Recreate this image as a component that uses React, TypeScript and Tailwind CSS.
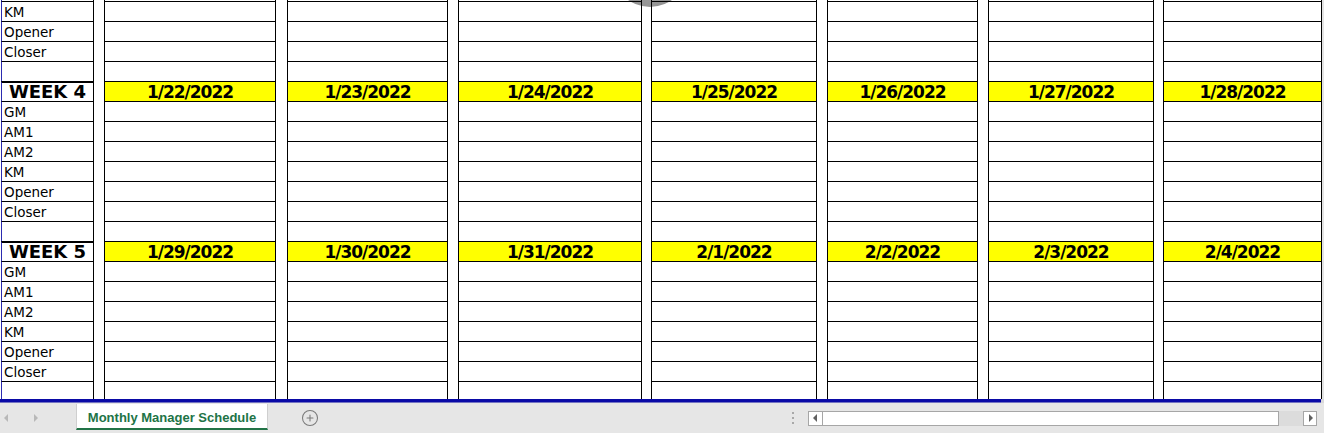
import { CirclePlus } from "lucide-react";

type Row = { kind: "label"; text: string } | { kind: "week"; week: string; dates: string[] } | { kind: "blank" };

const COLS = [172, 161, 184, 166, 151, 166, 159];
const GAPS = [11, 10, 9, 10, 10, 9];

const ROLES = ["GM", "AM1", "AM2", "KM", "Opener", "Closer"];

const rows: Row[] = [
  { kind: "label", text: "KM" },
  { kind: "label", text: "Opener" },
  { kind: "label", text: "Closer" },
  { kind: "blank" },
  { kind: "week", week: "WEEK 4", dates: ["1/22/2022", "1/23/2022", "1/24/2022", "1/25/2022", "1/26/2022", "1/27/2022", "1/28/2022"] },
  ...ROLES.map((r) => ({ kind: "label" as const, text: r })),
  { kind: "blank" },
  { kind: "week", week: "WEEK 5", dates: ["1/29/2022", "1/30/2022", "1/31/2022", "2/1/2022", "2/2/2022", "2/3/2022", "2/4/2022"] },
  ...ROLES.map((r) => ({ kind: "label" as const, text: r })),
  { kind: "blank" },
];

const SheetRow = ({ row, height, top = true }: { row?: Row; height: number; top?: boolean }) => {
  const isWeek = row?.kind === "week";
  const lineTop = top ? "border-t border-t-black" : "";
  return (
    <div className="flex" style={{ height }}>
      <div className="w-[1px]" />
      <div
        className={`w-[93px] border-l border-l-[#2b2bb0] border-r border-r-black flex items-end ${
          isWeek ? "border-t-2 border-t-black justify-center" : lineTop
        }`}
      >
        {row?.kind === "label" && (
          <span className="pl-[2px] pb-[2px] text-[13.5px] leading-[14px] text-black font-['DejaVu_Sans',sans-serif]">
            {row.text}
          </span>
        )}
        {row?.kind === "week" && (
          <span className="text-[18px] leading-[18px] font-bold text-black font-['DejaVu_Sans',sans-serif]">
            {row.week}
          </span>
        )}
      </div>
      <div className="w-[10px]" />
      {COLS.map((w, i) => (
        <div key={i} className="flex">
          <div
            className={`border-x border-black flex items-end justify-center ${lineTop} ${isWeek ? "bg-[#ffff00]" : ""}`}
            style={{ width: w }}
          >
            {row?.kind === "week" && (
              <span className="text-[17px] leading-[17px] font-bold tracking-[-1px] text-black font-['DejaVu_Sans',sans-serif]">
                {row.dates[i]}
              </span>
            )}
          </div>
          {i < GAPS.length && <div style={{ width: GAPS[i] }} />}
        </div>
      ))}
      <div className="w-[2px] bg-[#e3e3e3]" />
    </div>
  );
};

const Tri = ({ dir, className }: { dir: "l" | "r"; className?: string }) => (
  <svg width="5" height="8" viewBox="0 0 5 8" className={className}>
    <path d={dir === "l" ? "M4 0 L0 4 L4 8 Z" : "M1 0 L5 4 L1 8 Z"} fill="currentColor" />
  </svg>
);

export default function App() {
  return (
    <div className="relative w-[1324px] h-[433px] bg-white overflow-hidden">
      {/* spinner peeking from the top */}
      <div className="absolute left-[612px] top-[-69px] w-[76px] h-[76px] rounded-full bg-[radial-gradient(circle_at_50%_85%,#9a9a9a,#747474)]" />

      <div className="relative">
        <SheetRow height={1} top={false} />
        {rows.map((r, i) => (
          <SheetRow key={i} row={r} height={i === rows.length - 1 ? 18 : 20} />
        ))}
        <div className="flex">
          <div className="w-[1321px]">
            <div className="h-[3px] bg-[#0a0aa6]" />
            <div className="h-[1px] bg-[#7474c2]" />
          </div>
          <div className="w-[3px] bg-[#d9d9d9]" />
        </div>
      </div>

      {/* sheet tab bar */}
      <div className="flex h-[30px] bg-[#e6e6e6] font-['Liberation_Sans',sans-serif]">
        <div className="w-[76px] flex items-center text-[#b8b8b8]">
          <Tri dir="l" className="ml-[4px]" />
          <Tri dir="r" className="ml-[24px]" />
        </div>
        <div className="w-[192px] h-[26px] mt-[1px] pt-[2px] bg-white border-x border-[#cfcfcf] border-b-2 border-b-[#217346] flex items-center justify-center">
          <span className="text-[13px] font-bold text-[#217346] leading-none">Monthly Manager Schedule</span>
        </div>
        <div className="ml-[33px] flex items-center text-[#7a7a7a]">
          <CirclePlus size={18} strokeWidth={1.4} />
        </div>
        <div className="ml-[473px] flex flex-col justify-center gap-[3px]">
          <div className="w-[2px] h-[2px] bg-[#a8a8a8]" />
          <div className="w-[2px] h-[2px] bg-[#a8a8a8]" />
          <div className="w-[2px] h-[2px] bg-[#a8a8a8]" />
        </div>
        <div className="ml-[14px] flex items-center">
          <div className="flex h-[15px]">
            <div className="w-[15px] bg-white border border-[#a6a6a6] flex items-center justify-center text-[#606060]">
              <Tri dir="l" />
            </div>
            <div className="w-[456px] bg-white border-y border-r border-[#a6a6a6]" />
            <div className="w-[24px] bg-[#dcdcdc]" />
            <div className="w-[14px] bg-white border border-[#a6a6a6] flex items-center justify-center text-[#606060]">
              <Tri dir="r" />
            </div>
          </div>
        </div>
      </div>
    </div>
  );
}
